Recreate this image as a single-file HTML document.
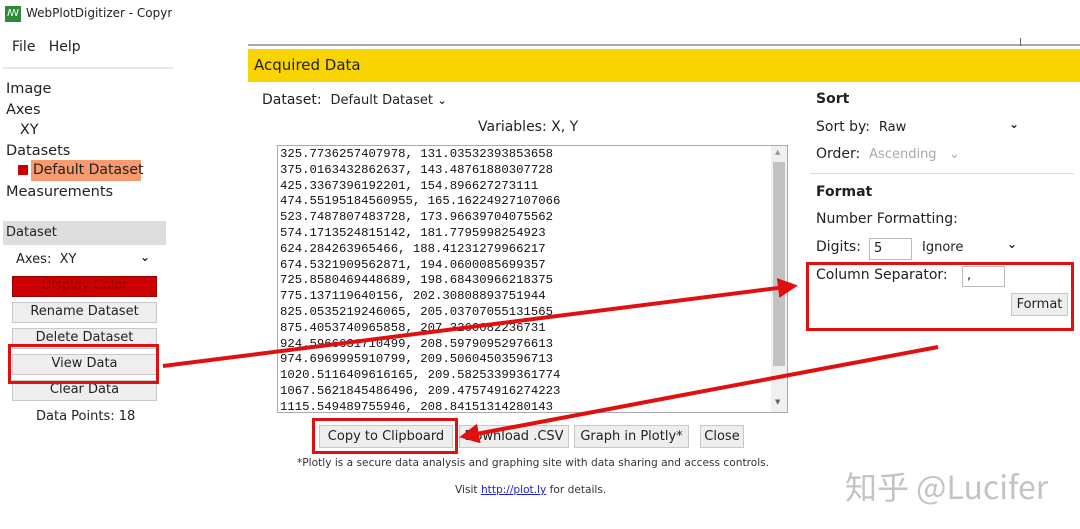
<!DOCTYPE html>
<html><head><meta charset="utf-8"><style>
*{margin:0;padding:0;box-sizing:border-box}
body{width:1080px;height:529px;background:#fff;position:relative;overflow:hidden;font-family:"DejaVu Sans","Liberation Sans",sans-serif;color:#222}
.a{position:absolute;white-space:nowrap}
.btn{position:absolute;background:#eee;border:1px solid #c8c8c8;font-size:13px;text-align:center;line-height:18px;color:#222}
.ta{font-family:"Liberation Mono","Noto Sans CJK SC",monospace;font-size:12.3px;line-height:15.8px;color:#111}
</style></head><body>
<div class="a" style="left:5px;top:6px;width:16px;height:16px;background:#2d8a3a;color:#fff;font-size:10px;line-height:16px;text-align:center">ꟿ</div>
<div class="a" style="left:26px;top:6px;font-size:12px;width:146px;overflow:hidden">WebPlotDigitizer - Copyright</div>
<div class="a" style="left:12px;top:39px;font-size:14px">File&nbsp;&nbsp; Help</div>
<div class="a" style="left:3px;top:67px;width:170px;height:2px;background:#e8e8e8"></div>
<div class="a" style="left:6px;top:79px;font-size:14.5px;line-height:20.6px">Image<br>Axes<br>&nbsp;&nbsp;&nbsp;XY<br>Datasets<br><br>Measurements</div>
<div class="a" style="left:18px;top:165px;width:10px;height:10px;background:#c00"></div>
<div class="a" style="left:31px;top:160px;width:110px;height:21px;background:#f79a6e"></div>
<div class="a" style="left:33px;top:160px;font-size:14px;line-height:21px">Default Dataset</div>
<div class="a" style="left:3px;top:221px;width:163px;height:24px;background:#ddd;font-size:13px;line-height:24px;padding-left:3px">Dataset</div>
<div class="a" style="left:16px;top:252px;font-size:13px">Axes:&nbsp; XY</div>
<div class="a" style="left:140px;top:250px;font-size:12px;font-weight:bold">⌄</div>
<div class="btn" style="left:12px;top:276px;width:145px;height:21px;background:#c00;border-color:#900;color:#900">Display Color</div>
<div class="btn" style="left:12px;top:302px;width:145px;height:21px">Rename Dataset</div>
<div class="btn" style="left:12px;top:328px;width:145px;height:21px">Delete Dataset</div>
<div class="btn" style="left:12px;top:354px;width:145px;height:21px">View Data</div>
<div class="btn" style="left:12px;top:380px;width:145px;height:21px">Clear Data</div>
<div class="a" style="left:8px;top:344px;width:151px;height:40px;border:3px solid #e01010"></div>
<div class="a" style="left:36px;top:409px;font-size:13px">Data Points: 18</div>

<div class="a" style="left:248px;top:44px;width:832px;height:2px;background:#aaa"></div>
<div class="a" style="left:1020px;top:38px;width:1px;height:8px;background:#666"></div>
<div class="a" style="left:248px;top:49px;width:832px;height:33px;background:#fad400;font-size:15px;line-height:33px;padding-left:6px">Acquired Data</div>
<div class="a" style="left:262px;top:92px;font-size:14px">Dataset:&nbsp; <span style="font-size:13px">Default Dataset</span> <b style="font-size:11px">⌄</b></div>
<div class="a" style="left:478px;top:119px;font-size:14px">Variables: X, Y</div>
<div class="a" style="left:277px;top:145px;width:511px;height:268px;border:1px solid #aaa;background:#fff"></div>
<div class="a" style="left:771px;top:146px;width:16px;height:266px;background:#f0f0f0"></div>
<div class="a" style="left:773px;top:162px;width:12px;height:204px;background:#c2c2c2"></div>
<div class="a" style="left:775px;top:148px;font-size:7px;color:#999">▲</div>
<div class="a" style="left:775px;top:398px;font-size:7px;color:#666">▼</div>
<div class="a ta" style="left:280px;top:147px">325.7736257407978,  131.03532393853658<br>375.0163432862637,  143.48761880307728<br>425.3367396192201,  154.896627273111<br>474.55195184560955,  165.16224927107066<br>523.7487807483728,  173.96639704075562<br>574.1713524815142,  181.7795998254923<br>624.284263965466,  188.41231279966217<br>674.5321909562871,  194.0600085699357<br>725.8580469448689,  198.68430966218375<br>775.137119640156,  202.30808893751944<br>825.0535219246065,  205.03707055131565<br>875.4053740965858,  207.3260082236731<br>924.5966631710499,  208.59790952976613<br>974.6969995910799,  209.50604503596713<br>1020.5116409616165,  209.58253399361774<br>1067.5621845486496,  209.47574916274223<br>1115.549489755946,  208.84151314280143</div>
<div class="btn" style="left:319px;top:425px;width:134px;height:23px;line-height:21px">Copy to Clipboard</div>
<div class="btn" style="left:459px;top:425px;width:110px;height:23px;line-height:21px">Download .CSV</div>
<div class="btn" style="left:574px;top:425px;width:115px;height:23px;line-height:21px">Graph in Plotly*</div>
<div class="btn" style="left:700px;top:425px;width:44px;height:23px;line-height:21px">Close</div>
<div class="a" style="left:312px;top:418px;width:146px;height:36px;border:3px solid #e01010"></div>
<div class="a" style="left:297px;top:457px;font-size:10.6px;color:#333">*Plotly is a secure data analysis and graphing site with data sharing and access controls.</div>
<div class="a" style="left:455px;top:484px;font-size:10.6px;color:#333">Visit <span style="color:#22c;text-decoration:underline">http://plot.ly</span> for details.</div>

<div class="a" style="left:816px;top:91px;font-size:14px;font-weight:bold">Sort</div>
<div class="a" style="left:816px;top:119px;font-size:14px">Sort by:&nbsp; <span style="font-size:13px">Raw</span></div>
<div class="a" style="left:1009px;top:117px;font-size:12px;font-weight:bold">⌄</div>
<div class="a" style="left:816px;top:146px;font-size:14px">Order:&nbsp; <span style="font-size:13px;color:#aaa">Ascending&nbsp;&nbsp; ⌄</span></div>
<div class="a" style="left:810px;top:173px;width:264px;height:1px;background:#ddd"></div>
<div class="a" style="left:816px;top:184px;font-size:14px;font-weight:bold">Format</div>
<div class="a" style="left:816px;top:211px;font-size:14px">Number Formatting:</div>
<div class="a" style="left:816px;top:239px;font-size:14px">Digits:</div>
<div class="a" style="left:869px;top:238px;width:43px;height:22px;border:1px solid #bbb;font-size:13px;padding-left:4px;line-height:20px">5</div>
<div class="a" style="left:922px;top:240px;font-size:13px">Ignore</div>
<div class="a" style="left:1007px;top:237px;font-size:12px;font-weight:bold">⌄</div>
<div class="a" style="left:816px;top:267px;font-size:14px">Column Separator:</div>
<div class="a" style="left:962px;top:266px;width:43px;height:21px;border:1px solid #bbb;font-size:13px;padding-left:4px;line-height:18px">,</div>
<div class="btn" style="left:1011px;top:293px;width:57px;height:23px;line-height:21px">Format</div>
<div class="a" style="left:806px;top:262px;width:268px;height:69px;border:3px solid #e01010"></div>

<div class="a" style="left:845px;top:463px;font-size:32px;color:#c4c4c4;font-family:'Noto Sans CJK SC','DejaVu Sans',sans-serif">知乎 @Lucifer</div>

<svg class="a" style="left:0;top:0" width="1080" height="529">
<defs><marker id="m" markerWidth="5" markerHeight="5" refX="2" refY="2.5" orient="auto"><path d="M0,0 L5,2.5 L0,5 z" fill="#e01010"/></marker></defs>
<line x1="163" y1="366" x2="786" y2="287" stroke="#e01010" stroke-width="4" marker-end="url(#m)"/>
<line x1="938" y1="347" x2="471" y2="435" stroke="#e01010" stroke-width="4" marker-end="url(#m)"/>
</svg>
</body></html>
